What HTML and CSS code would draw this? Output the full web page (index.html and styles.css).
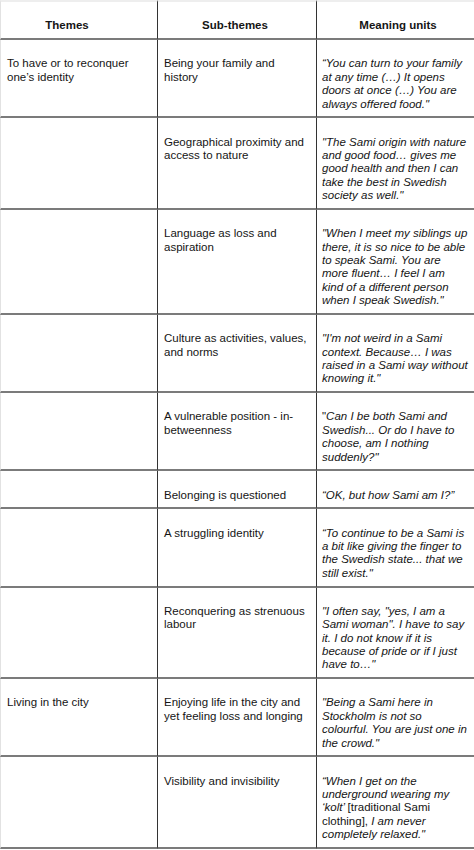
FILE: index.html
```html
<!DOCTYPE html>
<html lang="en">
<head>
<meta charset="utf-8">
<title>Themes, sub-themes and meaning units</title>
<link rel="stylesheet" href="styles.css">
</head>
<body>
<table class="grid">
  <colgroup>
    <col class="c1">
    <col class="c2">
    <col class="c3">
  </colgroup>
  <thead>
    <tr>
      <th class="h1">Themes</th>
      <th class="h2">Sub-themes</th>
      <th class="h3">Meaning units</th>
    </tr>
  </thead>
  <tbody>
    <tr>
      <td class="theme">To have or to reconquer<br>one’s identity</td>
      <td class="sub">Being your family and<br>history</td>
      <td class="quote">“You can turn to your family<br>at any time (…) It opens<br>doors at once (…) You are<br>always offered food."</td>
    </tr>
    <tr>
      <td class="theme"></td>
      <td class="sub">Geographical proximity and<br>access to nature</td>
      <td class="quote">"The Sami origin with nature<br>and good food… gives me<br>good health and then I can<br>take the best in Swedish<br>society as well."</td>
    </tr>
    <tr>
      <td class="theme"></td>
      <td class="sub">Language as loss and<br>aspiration</td>
      <td class="quote">"When I meet my siblings up<br>there, it is so nice to be able<br>to speak Sami. You are<br>more fluent… I feel I am<br>kind of a different person<br>when I speak Swedish."</td>
    </tr>
    <tr>
      <td class="theme"></td>
      <td class="sub">Culture as activities, values,<br>and norms</td>
      <td class="quote">"I'm not weird in a Sami<br>context. Because… I was<br>raised in a Sami way without<br>knowing it."</td>
    </tr>
    <tr>
      <td class="theme"></td>
      <td class="sub">A vulnerable position - in-<br>betweenness</td>
      <td class="quote"><span class="up">"</span>Can I be both Sami and<br>Swedish... Or do I have to<br>choose, am I nothing<br>suddenly?"</td>
    </tr>
    <tr>
      <td class="theme"></td>
      <td class="sub">Belonging is questioned</td>
      <td class="quote">“OK, but how Sami am I?”</td>
    </tr>
    <tr>
      <td class="theme"></td>
      <td class="sub">A struggling identity</td>
      <td class="quote">“To continue to be a Sami is<br>a bit like giving the finger to<br>the Swedish state... that we<br>still exist."</td>
    </tr>
    <tr>
      <td class="theme"></td>
      <td class="sub">Reconquering as strenuous<br>labour</td>
      <td class="quote">"I often say, "yes, I am a<br>Sami woman". I have to say<br>it. I do not know if it is<br>because of pride or if I just<br>have to…"</td>
    </tr>
    <tr>
      <td class="theme">Living in the city</td>
      <td class="sub">Enjoying life in the city and<br>yet feeling loss and longing</td>
      <td class="quote">"Being a Sami here in<br>Stockholm is not so<br>colourful. You are just one in<br>the crowd."</td>
    </tr>
    <tr>
      <td class="theme"></td>
      <td class="sub">Visibility and invisibility</td>
      <td class="quote">“When I get on the<br>underground wearing my<br>‘kolt’ <span class="up">[traditional Sami</span><br><span class="up">clothing],</span> I am never<br>completely relaxed."</td>
    </tr>
  </tbody>
</table>
</body>
</html>
```

FILE: styles.css
```css
html, body {
  margin: 0;
  padding: 0;
  background: #ffffff;
}

body {
  font-family: "Liberation Sans", Arial, sans-serif;
  font-size: 11.5px;
  line-height: 13.4px;
  color: #151515;
}

.grid {
  width: 474px;
  border-collapse: separate;
  border-spacing: 0;
  table-layout: fixed;
}

.c1 { width: 158px; }
.c2 { width: 159px; }
.c3 { width: 157px; }

.grid th,
.grid td {
  vertical-align: top;
  text-align: left;
  padding: 17.3px 3px 5.3px 6px;
  border-bottom: 2px solid #7b7b7b;
  white-space: nowrap;
}

.grid th {
  font-weight: bold;
  text-align: center;
  border-top: 2px solid #eeeeee;
}

.grid th.h1 { padding-left: 0; padding-right: 24px; }
.grid th.h2 { padding-left: 0; padding-right: 4px; }
.grid th.h3 { padding-left: 5px; padding-right: 0; }

.grid th.h1,
.grid td.theme {
  border-left: 1px solid #e2e2e2;
  border-right: 1px solid #333333;
}

.grid td.theme {
  padding-left: 6px;
}

.grid th.h2,
.grid td.sub {
  border-right: 1px solid #333333;
}

.grid td.sub {
  padding-left: 6px;
}

.grid td.quote {
  font-style: italic;
  padding-left: 5px;
}

.up {
  font-style: normal;
}
```
